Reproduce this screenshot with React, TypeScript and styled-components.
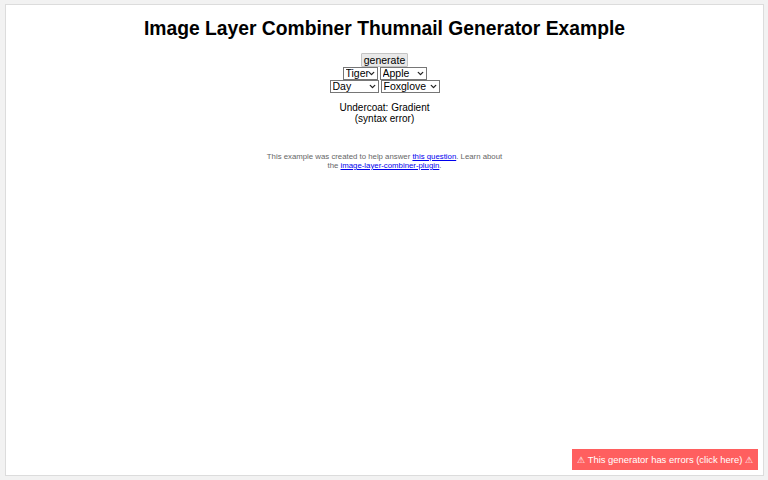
import React from "react";
import styled, { createGlobalStyle } from "styled-components";
import { ChevronDown } from "lucide-react";

const GlobalStyle = createGlobalStyle`
  html, body {
    margin: 0;
    padding: 0;
    height: 100%;
    background: #f2f2f2;
    font-family: "Liberation Sans", Arial, sans-serif;
  }
  #root {
    height: 100%;
  }
`;

const Page = styled.div`
  box-sizing: border-box;
  height: 100%;
  padding: 4px 4px 4px 5px;
`;

const Frame = styled.div`
  position: relative;
  box-sizing: border-box;
  height: 100%;
  background: #ffffff;
  border: 1px solid #dcdcdc;
  display: flex;
  flex-direction: column;
  align-items: center;
`;

const Title = styled.h1`
  margin: 13px 0 13px;
  font-size: 19.3px;
  font-weight: bold;
  color: #000;
  text-align: center;
`;

const Controls = styled.div`
  display: flex;
  flex-direction: column;
  align-items: center;
`;

const Row = styled.div`
  display: flex;
  gap: 2px;
  justify-content: center;
`;

const Button = styled.button`
  display: block;
  font-family: "Liberation Sans", Arial, sans-serif;
  font-size: 10.5px;
  height: 14px;
  padding: 0 2px;
  line-height: 12px;
  background: #e9e9e9;
  border: 1px solid #c4c4c4;
  border-radius: 1px;
  color: #000;
`;

const SelectBox = styled.div<{ $w: number }>`
  position: relative;
  width: ${(p) => p.$w}px;
  height: 13px;
`;

const Select = styled.select`
  display: block;
  appearance: none;
  -webkit-appearance: none;
  box-sizing: border-box;
  font-family: "Liberation Sans", Arial, sans-serif;
  font-size: 10.5px;
  line-height: 11px;
  width: 100%;
  height: 100%;
  margin: 0;
  padding: 0 0 0 2px;
  border: 1px solid #767676;
  border-radius: 0;
  background: #fff;
  color: #000;
  outline: none;
`;

const Arrow = styled(ChevronDown)`
  position: absolute;
  right: 2px;
  top: 2px;
  width: 9px;
  height: 9px;
  color: #222;
  pointer-events: none;
`;

const Status = styled.div`
  margin-top: 10px;
  font-size: 10px;
  line-height: 10.5px;
  color: #000;
  text-align: center;
`;

const Note = styled.p`
  margin: 28px 0 0;
  width: 244px;
  font-size: 7.8px;
  line-height: 9px;
  color: #666;
  text-align: center;
  a {
    color: #00e;
    text-decoration: underline;
  }
`;

const ErrorBadge = styled.div`
  position: absolute;
  right: 5px;
  bottom: 5px;
  padding: 0 5px;
  height: 21px;
  line-height: 21px;
  background: #ff5f5f;
  color: #fff;
  font-size: 9.45px;
  cursor: pointer;
`;

function Dropdown({ width, value }: { width: number; value: string }) {
  return (
    <SelectBox $w={width}>
      <Select defaultValue={value}>
        <option>{value}</option>
      </Select>
      <Arrow strokeWidth={3.5} />
    </SelectBox>
  );
}

export default function App() {
  return (
    <>
      <GlobalStyle />
      <Page>
        <Frame>
          <Title>Image Layer Combiner Thumnail Generator Example</Title>
          <Controls>
            <Button>generate</Button>
            <Row>
              <Dropdown width={35} value="Tiger" />
              <Dropdown width={47} value="Apple" />
            </Row>
            <Row>
              <Dropdown width={49} value="Day" />
              <Dropdown width={59} value="Foxglove" />
            </Row>
          </Controls>
          <Status>
            Undercoat: Gradient
            <br />
            (syntax error)
          </Status>
          <Note>
            This example was created to help answer <a href="#">this question</a>. Learn about
            the <a href="#">image-layer-combiner-plugin</a>.
          </Note>
          <ErrorBadge>⚠ This generator has errors (click here) ⚠</ErrorBadge>
        </Frame>
      </Page>
    </>
  );
}
